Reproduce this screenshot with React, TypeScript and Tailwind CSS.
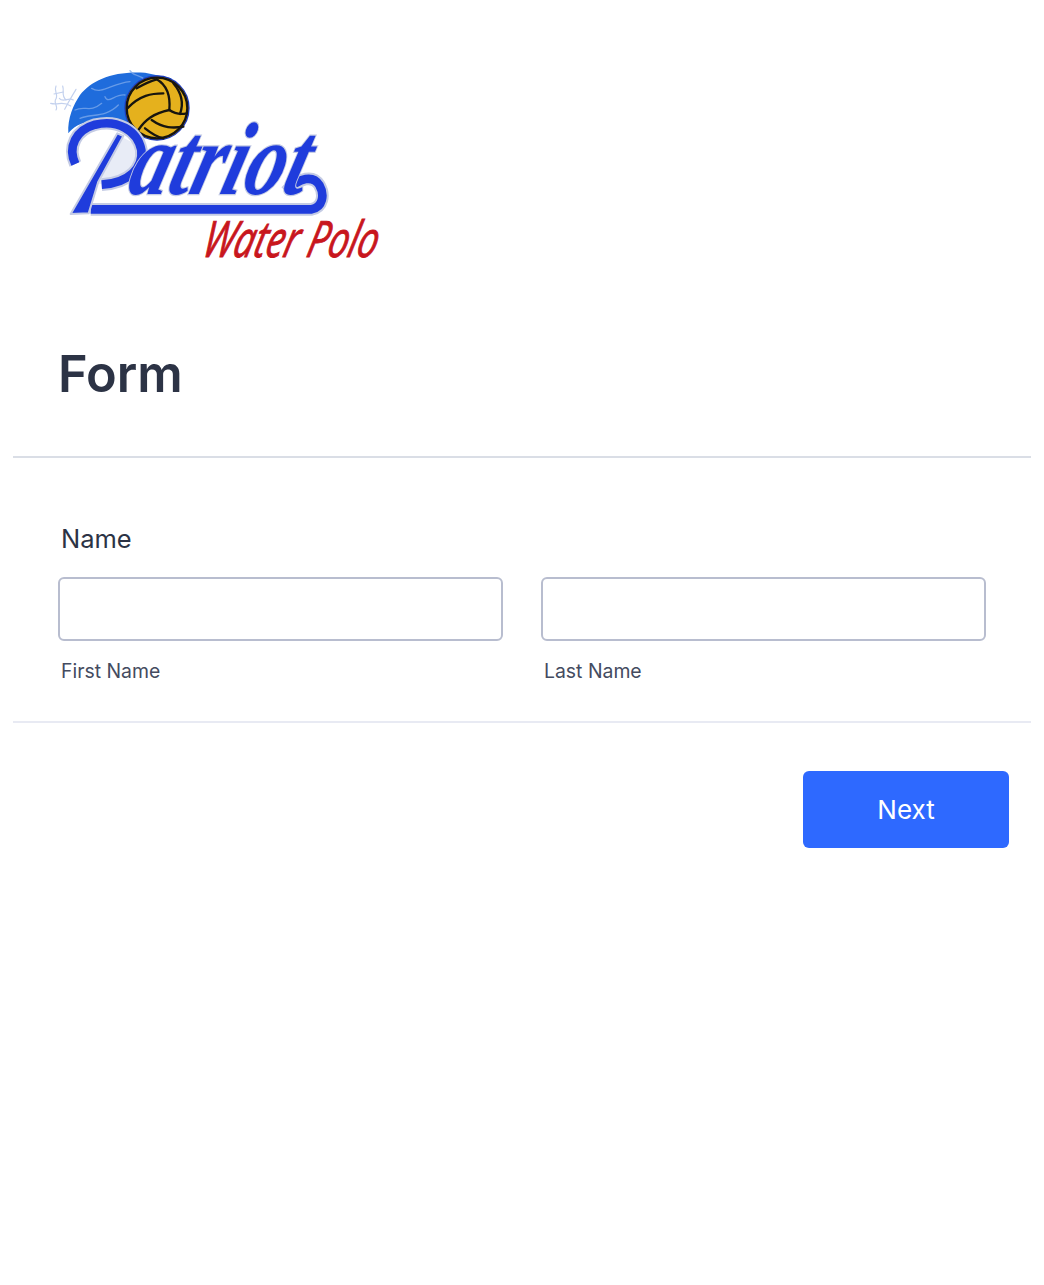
import React from "react";

function Logo() {
  return (
    <svg viewBox="0 0 1110 690" className="block w-[370px] h-[230px]">
      {/* splash */}
      <g fill="none" stroke="#c3d1ee" strokeWidth="3.5" strokeLinecap="round">
        <path d="M78 108 C70 125 88 135 76 150 C72 160 85 170 78 180" />
        <path d="M62 160 C85 166 100 152 122 168" />
        <path d="M98 108 C104 125 92 135 108 150" />
        <path d="M138 118 C128 135 118 150 104 178" />
        <path d="M72 132 L100 126" />
        <path d="M88 145 C100 160 115 140 130 150" />
      </g>
      {/* wave */}
      <path
        d="M115 250 C112 205 130 165 150 135 C185 90 250 62 345 68 L425 85 L300 235 L190 212 C150 218 128 232 115 250 Z"
        fill="#1f6cdc"
      />
      <g fill="none" stroke="#7fabec" strokeWidth="4" opacity="0.75" strokeLinecap="round">
        <path d="M135 180 C165 165 180 190 215 160" />
        <path d="M185 115 C215 135 245 100 300 95" />
        <path d="M150 205 C185 190 225 205 265 165" />
        <path d="M225 140 C235 165 255 130 285 135" />
        <path d="M300 62 C310 80 325 70 345 90" />
      </g>
      {/* ball */}
      <circle cx="381" cy="174" r="96" fill="#e5b11d" stroke="#1c3bc0" strokeWidth="4" />
      <g fill="none" stroke="#17150f" strokeLinecap="round" strokeWidth="7">
        <circle cx="381" cy="174" r="91" />
        <path d="M320 115 C345 100 365 92 380 88" />
        <path d="M292 175 C330 135 365 130 400 130" />
        <path d="M380 88 C410 105 422 135 418 180" />
        <path d="M418 180 C370 190 345 210 325 240" />
        <path d="M418 180 C435 192 450 194 470 190" />
        <path d="M430 100 C460 135 460 165 450 192" />
        <path d="M365 210 C400 235 430 235 460 230" />
        <path d="M345 235 C370 255 385 262 400 265" />
      </g>
      {/* tail of the script */}
      <path
        d="M182 478 L845 478 C878 472 885 435 868 405 C850 376 810 380 768 425"
        fill="none"
        stroke="#c4cbe4"
        strokeWidth="38"
      />
      <path
        d="M182 478 L845 478 C878 472 885 435 868 405 C850 376 810 380 768 425"
        fill="none"
        stroke="#1f3cdc"
        strokeWidth="26"
      />
      {/* P */}
      <path d="M262 255 L335 290 L320 370 L240 405 L195 400 Z" fill="#e8ecf6" />
      <path
        d="M136 342 C112 290 138 240 195 224 C262 208 322 240 334 300 C340 352 300 398 215 404"
        fill="none"
        stroke="#c4cbe4"
        strokeWidth="38"
      />
      <path
        d="M262 250 L280 258 L205 395 L176 490 L122 492 Z"
        fill="#1f3cdc"
        stroke="#c4cbe4"
        strokeWidth="6"
        strokeLinejoin="round"
      />
      <path
        d="M136 342 C112 290 138 240 195 224 C262 208 322 240 334 300 C340 352 300 398 215 404"
        fill="none"
        stroke="#1f3cdc"
        strokeWidth="26"
      />
      <text
        transform="translate(285 432) skewX(-16) scale(1.06 1.38)"
        fontFamily="'Liberation Serif', serif"
        fontStyle="italic"
        fontWeight="700"
        fontSize="225"
        fill="#1f3cdc"
        stroke="#c4cbe4"
        strokeWidth="5"
        paintOrder="stroke"
      >
        atriot
      </text>
      <text
        transform="translate(512 620) skewX(-14) scale(1.08 1.5)"
        fontFamily="'Open Sans', sans-serif"
        fontStyle="italic"
        fontSize="100"
        fill="#c8161d"
        stroke="#c8161d"
        strokeWidth="2"
      >
        Water Polo
      </text>
    </svg>
  );
}

function NameField({ label }: { label: string }) {
  return (
    <div className="w-[445px]">
      <input
        type="text"
        aria-label={label}
        className="block w-full h-[64px] rounded-[6px] border-2 border-[#b8bdcf] bg-white"
      />
      <label className="block mt-[17px] pl-[3px] text-[19.4px] leading-[26px] text-[#444b60]">{label}</label>
    </div>
  );
}

export default function App() {
  return (
    <div className="min-h-[1285px] bg-white px-[13px] font-['Inter',sans-serif]">
      <div className="pt-[50px] pl-[17px]">
        <Logo />
      </div>
      <div className="h-[178px] border-b-2 border-[#dadee6] pt-[63px] pl-[45px]">
        <h1 className="text-[50.5px] leading-[62px] font-semibold text-[#2c3345]">Form</h1>
      </div>
      <div className="h-[265px] border-b-2 border-[#e8eaf3] pt-[65px] pl-[45px]">
        <div className="pl-[3px] text-[25.5px] leading-[32px] font-normal text-[#2c3345]">Name</div>
        <div className="mt-[22px] flex gap-[38px]">
          <NameField label="First Name" />
          <NameField label="Last Name" />
        </div>
      </div>
      <div className="flex justify-end pt-[48px] pr-[22px]">
        <button className="w-[206px] h-[77px] rounded-[6px] bg-[#2e69ff] text-[26px] font-normal text-white">
          Next
        </button>
      </div>
    </div>
  );
}
